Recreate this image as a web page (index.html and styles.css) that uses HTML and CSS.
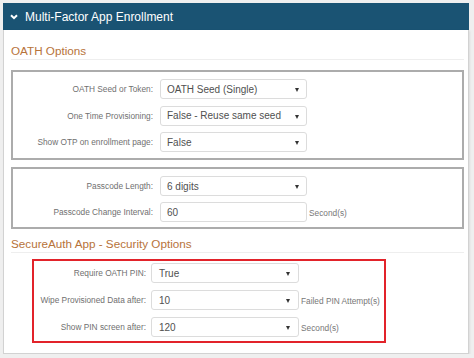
FILE: index.html
```html
<!DOCTYPE html>
<html lang="en">
<head>
    <meta charset="UTF-8">
    <title>Multi-Factor App Enrollment</title>
    <link rel="stylesheet" href="styles.css">
</head>
<body>
    <div class="panel">
        <div class="panel-head">
            <svg class="chevron" width="8" height="6" viewBox="0 0 8 6"><polyline points="1,1.2 4,4.2 7,1.2" fill="none" stroke="#fff" stroke-width="2"/></svg>
            <span>Multi-Factor App Enrollment</span>
        </div>
        <div class="panel-body">
            <h2 class="section">OATH Options</h2>

            <div class="group g1">
                <div class="row">
                    <label>OATH Seed or Token:</label>
                    <div class="select"><span>OATH Seed (Single)</span><i class="caret"></i></div>
                </div>
                <div class="row">
                    <label>One Time Provisioning:</label>
                    <div class="select"><span>False - Reuse same seed</span><i class="caret"></i></div>
                </div>
                <div class="row">
                    <label>Show OTP on enrollment page:</label>
                    <div class="select"><span>False</span><i class="caret"></i></div>
                </div>
            </div>

            <div class="group g2">
                <div class="row">
                    <label>Passcode Length:</label>
                    <div class="select"><span>6 digits</span><i class="caret"></i></div>
                </div>
                <div class="row">
                    <label>Passcode Change Interval:</label>
                    <div class="select"><span>60</span></div>
                    <span class="unit">Second(s)</span>
                </div>
            </div>

            <h2 class="section second">SecureAuth App - Security Options</h2>

            <div class="group highlight">
                <div class="row">
                    <label>Require OATH PIN:</label>
                    <div class="select"><span>True</span><i class="caret"></i></div>
                </div>
                <div class="row">
                    <label>Wipe Provisioned Data after:</label>
                    <div class="select"><span>10</span><i class="caret"></i></div>
                    <span class="unit">Failed PIN Attempt(s)</span>
                </div>
                <div class="row">
                    <label>Show PIN screen after:</label>
                    <div class="select"><span>120</span><i class="caret"></i></div>
                    <span class="unit">Second(s)</span>
                </div>
            </div>
        </div>
    </div>
</body>
</html>
```

FILE: styles.css
```css
body{
  margin: 0;
  background-color: #efefef;
  font-family: "Liberation Sans", Arial, sans-serif;
}
/* panel */
.panel{
  margin: 3px 0 0 3px;
  width: 466px;
}
.panel-head{
  height: 27px;
  display: flex;
  align-items: center;
  background-color: #1a5373;
  color: #fff;
  font-size: 12px;
  padding-left: 7px;
}
.chevron{
  margin-right: 7px;
  margin-top: 1px;
}
.panel-body{
  background-color: #fff;
  border: 1px solid #d2d2d2;
  border-top: none;
  padding: 14px 4px 10px 7px;
  box-shadow: 1px 1px 2px rgba(0,0,0,0.08);
}
/* headings */
.section{
  margin: 0;
  font-size: 11.7px;
  font-weight: normal;
  line-height: 14px;
  color: #b7733a;
  padding-bottom: 1px;
  border-bottom: 1px solid #eee;
}
.section.second{
  margin-top: 8px;
}
/* groups of rows */
.group{
  display: flex;
  flex-direction: column;
  border: 2px solid #acacac;
}
.g1{
  margin-top: 10px;
  padding: 7px 0 6px;
  gap: 6.5px;
}
.g2{
  margin-top: 7px;
  padding: 7px 0 5px;
  gap: 6px;
}
.highlight{
  margin: 6px 0 0 21px;
  width: 350px;
  border-color: #e2232a;
  padding: 2px 0 4px;
  gap: 7px;
}
.row{
  display: flex;
  align-items: center;
  height: 20px;
}
.row label{
  width: 140px;
  text-align: right;
  font-size: 8.3px;
  color: #707070;
  margin-right: 7px;
}
.highlight .row label{
  width: 112px;
  margin-right: 5px;
}
.select{
  position: relative;
  box-sizing: border-box;
  width: 147px;
  height: 20px;
  border: 1px solid #dcdcdc;
  border-radius: 3px;
  display: flex;
  align-items: center;
  padding-left: 6px;
  font-size: 10px;
  color: #505050;
}
.highlight .select{
  width: 148px;
  padding-left: 7px;
}
.caret{
  position: absolute;
  right: 7px;
  top: 8px;
  width: 0;
  height: 0;
  border-left: 2.5px solid transparent;
  border-right: 2.5px solid transparent;
  border-top: 4px solid #333;
}
.highlight .caret{
  right: 8px;
}
.unit{
  font-size: 8.3px;
  color: #777;
  margin-left: 2px;
  margin-top: 2px;
}
```
